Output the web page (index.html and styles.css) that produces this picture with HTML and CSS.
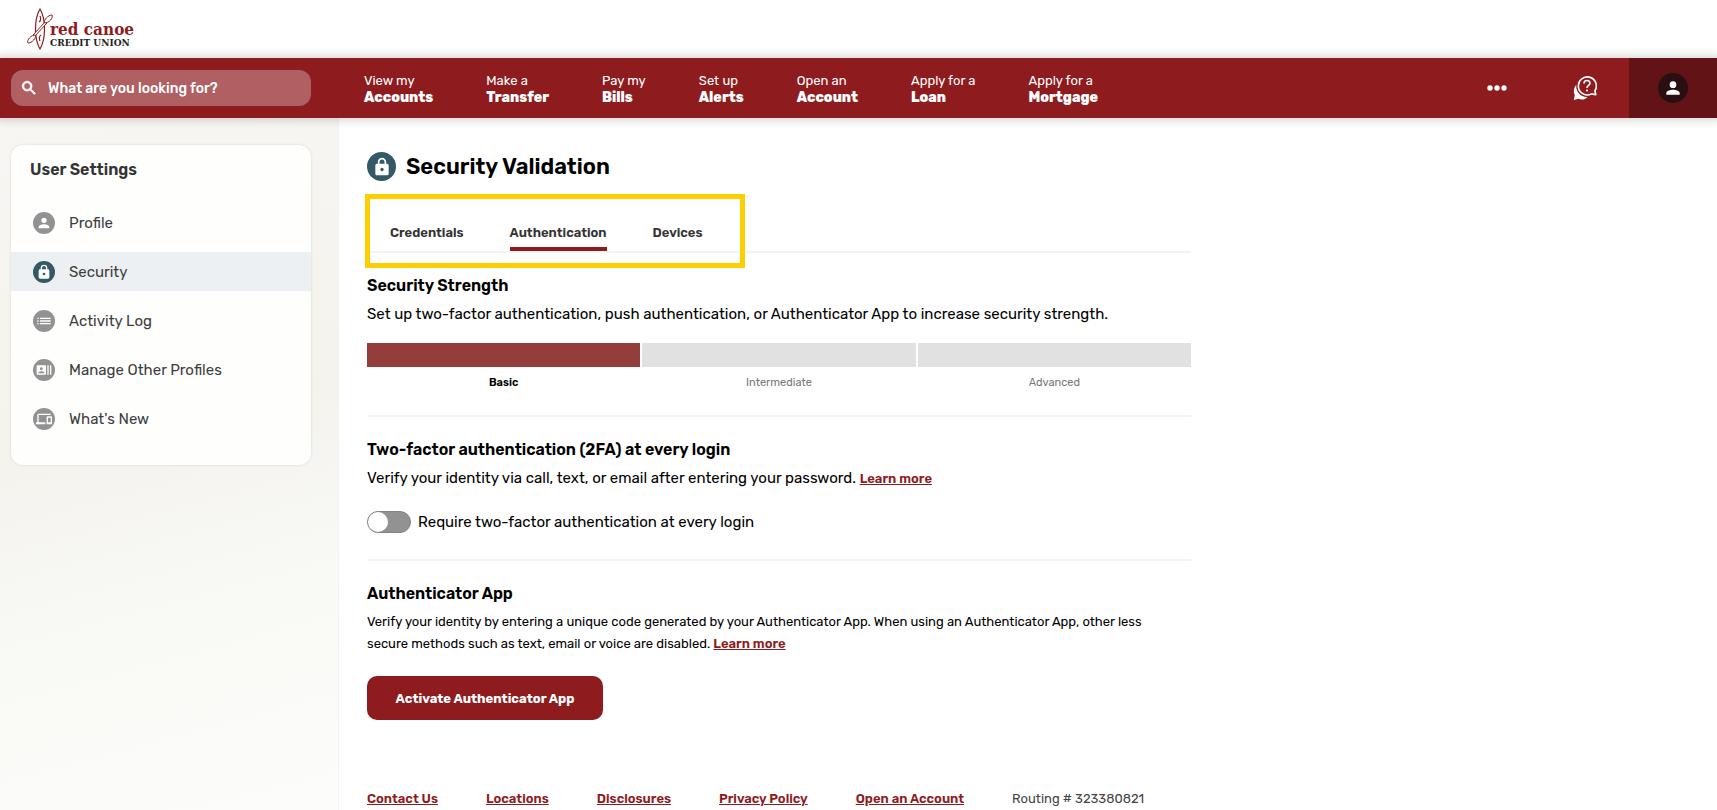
FILE: index.html
```html
<!DOCTYPE html>
<html lang="en">
<head>
  <meta charset="UTF-8" />
  <title>Security Validation | Red Canoe Credit Union</title>
  <meta name="viewport" content="width=device-width, initial-scale=1.0" />
  <link rel="stylesheet" href="styles.css">
</head>
<body>
  <!-- Shared icons -->
  <svg class="sprite" aria-hidden="true">
    <symbol id="icon-person" viewBox="0 0 24 24">
      <path d="M12 12a4 4 0 1 0 0-8 4 4 0 0 0 0 8zm0 2c-2.700 0-8 1.300-8 4v2h16v-2c0-2.700-5.300-4-8-4z" />
    </symbol>
    <symbol id="icon-lock" viewBox="0 0 24 24">
      <path fill-rule="evenodd" d="M18 8h-1V6A5 5 0 0 0 7 6v2H6a2 2 0 0 0-2 2v10c0 1.100.9 2 2 2h12a2 2 0 0 0 2-2V10a2 2 0 0 0-2-2zm-6 9a2 2 0 1 1 0-4 2 2 0 0 1 0 4zM9 8V6a3 3 0 0 1 6 0v2H9z" />
    </symbol>
    <symbol id="icon-list" viewBox="0 0 24 24">
      <path d="M2 7h2v2H2zm4 0h16v2H6zM2 11h2v2H2zm4 0h16v2H6zM2 15h2v2H2zm4 0h16v2H6z" />
    </symbol>
    <symbol id="icon-profiles" viewBox="0 0 24 24">
      <path fill-rule="evenodd" d="M21 5v14h2V5h-2zm-4 14h2V5h-2v14zM14 5H2a1 1 0 0 0-1 1v12a1 1 0 0 0 1 1h12a1 1 0 0 0 1-1V6a1 1 0 0 0-1-1zM8 7.800a2.200 2.200 0 1 1 0 4.400 2.200 2.200 0 0 1 0-4.400zM12.500 17h-9v-.8c0-1.500 3-2.300 4.500-2.300s4.500.8 4.500 2.300z" />
    </symbol>
    <symbol id="icon-devices" viewBox="0 0 24 24">
      <path fill-rule="evenodd" d="M4 6h18V4H4a2 2 0 0 0-2 2v11H0v3h14v-3H4V6zm19 2h-6a1 1 0 0 0-1 1v10a1 1 0 0 0 1 1h6a1 1 0 0 0 1-1V9a1 1 0 0 0-1-1zm-1 9h-4v-7h4v7z" />
    </symbol>
  </svg>

  <header>
    <div class="brand">
      <a class="logo" href="#" aria-label="Red Canoe Credit Union">
        <svg class="logo-mark" viewBox="0 0 28 42" aria-hidden="true">
          <g fill="none" stroke="#8e1c1e" stroke-width="1.200">
            <path d="M14 1C8 11 8 31 14 41C20 31 20 11 14 1z" />
            <path d="M13 14c2-1 2-4 1-6M15 27c-2 1-2 4-1 6" />
          </g>
          <g fill="#fff" stroke="#8e1c1e" stroke-width="1">
            <path d="M7 27L19.500 13.500L21 15L8.500 28.500z" />
            <path d="M18.500 15c-1-3 3.500-8 7.500-8c1.500 3-3 8-7.500 8z" />
            <path d="M9.500 27c1 3-3.500 8-7.500 8c-1.500-3 3-8 7.500-8z" />
          </g>
        </svg>
        <span class="logo-text">
          <span class="logo-name">red canoe</span>
          <span class="logo-sub">CREDIT UNION</span>
        </span>
      </a>
    </div>

    <div class="navbar">
      <form class="search">
        <svg class="search-icon" viewBox="0 0 24 24" aria-hidden="true">
          <path d="M15.500 14h-.8l-.3-.3A6.500 6.500 0 1 0 13.700 14.400l.3.3v.8l5 5 1.500-1.500-5-5zm-6 0a4.500 4.500 0 1 1 0-9 4.500 4.500 0 0 1 0 9z" />
        </svg>
        <input type="search" aria-label="Search" placeholder="What are you looking for?">
      </form>

      <nav class="main-nav">
        <a href="#">View my <strong>Accounts</strong></a>
        <a href="#">Make a <strong>Transfer</strong></a>
        <a href="#">Pay my <strong>Bills</strong></a>
        <a href="#">Set up <strong>Alerts</strong></a>
        <a href="#">Open an <strong>Account</strong></a>
        <a href="#">Apply for a <strong>Loan</strong></a>
        <a href="#">Apply for a <strong>Mortgage</strong></a>
      </nav>

      <div class="actions">
        <button class="action" type="button" aria-label="More">
          <svg class="dots" viewBox="0 0 20 6"><circle cx="3" cy="3" r="2.700" /><circle cx="10" cy="3" r="2.700" /><circle cx="17" cy="3" r="2.700" /></svg>
        </button>
        <button class="action" type="button" aria-label="Help">
          <svg class="chat" viewBox="0 0 24 24">
            <path d="M3.300 9C.8 11.500 0 16 1.800 19L.8 24L5.500 22.800C8.500 24.300 12.500 23.500 14.500 21C8 21.500 2.500 16 3.300 9z" />
            <path d="M22.800 18.700L21.900 14.800A9 9 0 1 0 18.500 17.900z" fill="none" stroke="#fff" stroke-width="1.600" stroke-linejoin="round" />
            <path d="M11 7.500c0-4 6-4 6-.5c0 2.400-3 2.300-3 5" fill="none" stroke="#fff" stroke-width="1.600" />
            <circle cx="14" cy="14.500" r="1.100" />
          </svg>
        </button>
        <button class="action account" type="button" aria-label="Account">
          <span class="avatar"><svg><use href="#icon-person" /></svg></span>
        </button>
      </div>
    </div>
  </header>

  <div class="layout">
    <aside class="sidebar">
      <div class="settings">
        <h2>User Settings</h2>
        <nav class="settings-nav">
          <a href="#"><span class="badge"><svg><use href="#icon-person" /></svg></span>Profile</a>
          <a href="#" class="active"><span class="badge"><svg><use href="#icon-lock" /></svg></span>Security</a>
          <a href="#"><span class="badge"><svg><use href="#icon-list" /></svg></span>Activity Log</a>
          <a href="#"><span class="badge"><svg><use href="#icon-profiles" /></svg></span>Manage Other Profiles</a>
          <a href="#"><span class="badge"><svg><use href="#icon-devices" /></svg></span>What's New</a>
        </nav>
      </div>
    </aside>

    <main>
      <div class="content">
        <h1><span class="badge badge-large"><svg><use href="#icon-lock" /></svg></span>Security Validation</h1>

        <div class="tab-bar">
          <div class="tabs" role="tablist">
            <button type="button" role="tab" aria-selected="false">Credentials</button>
            <button type="button" role="tab" aria-selected="true">Authentication</button>
            <button type="button" role="tab" aria-selected="false">Devices</button>
          </div>
          <div class="highlight"></div>
        </div>

        <section class="strength-section">
          <h3>Security Strength</h3>
          <p>Set up two-factor authentication, push authentication, or Authenticator App to increase security strength.</p>
          <ol class="strength">
            <li class="current">Basic</li>
            <li>Intermediate</li>
            <li>Advanced</li>
          </ol>
        </section>

        <section class="twofactor-section">
          <h3>Two-factor authentication (2FA) at every login</h3>
          <p>Verify your identity via call, text, or email after entering your password. <a href="#">Learn more</a></p>
          <label class="toggle">
            <input type="checkbox" role="switch">
            Require two-factor authentication at every login
          </label>
        </section>

        <section class="app-section">
          <h3>Authenticator App</h3>
          <p class="small">Verify your identity by entering a unique code generated by your Authenticator App. When using an Authenticator App, other less secure methods such as text, email or voice are disabled. <a href="#">Learn more</a></p>
          <button class="primary" type="button">Activate Authenticator App</button>
        </section>

        <footer>
          <a href="#">Contact Us</a>
          <a href="#">Locations</a>
          <a href="#">Disclosures</a>
          <a href="#">Privacy Policy</a>
          <a href="#">Open an Account</a>
          <span>Routing # 323380821</span>
        </footer>
      </div>
    </main>
  </div>
</body>
</html>
```
FILE: styles.css
```css
* {
  box-sizing: border-box;
}

body {
  margin: 0;
  min-height: 100vh;
  display: flex;
  flex-direction: column;
  font-family: Rubik, Roboto, sans-serif;
  font-size: 15px;
  color: #000;
  background: #fff;
}

h1, h2, h3, p {
  margin: 0;
}

button,
input {
  font-family: inherit;
}

button {
  border: 0;
  padding: 0;
  background: none;
  cursor: pointer;
}

a {
  color: #8e1c1e;
}

.sprite {
  display: none;
}

/* Header */
header {
  position: relative;
  z-index: 1;
}

.brand {
  height: 58px;
  padding: 8px 26px;
}

.logo {
  display: inline-flex;
  text-decoration: none;
}

.logo-mark {
  width: 28px;
  height: 42px;
}

.logo-text {
  display: flex;
  flex-direction: column;
  margin-left: -4px;
  padding-top: 12px;
}

.logo-name {
  font: bold 17px/18px "DejaVu Serif Condensed", "DejaVu Serif", serif;
}

.logo-sub {
  font: bold 9px/10px "DejaVu Serif", serif;
  color: #222;
}

.navbar {
  display: flex;
  align-items: center;
  height: 60px;
  padding-left: 11px;
  background: #8e1c1e;
  box-shadow: 0 0 8px 3px rgba(0, 0, 0, 0.15);
}

.search {
  display: flex;
  align-items: center;
  width: 300px;
  height: 36px;
  padding: 0 9px;
  gap: 10px;
  border-radius: 12px;
  background: #b06062;
}

.search-icon {
  width: 18px;
  height: 18px;
  flex: none;
  fill: #fff;
  stroke: #fff;
}

.search input {
  flex: 1;
  min-width: 0;
  border: 0;
  padding: 0;
  background: none;
  color: #fff;
  font-size: 14px;
  font-weight: 500;
}

.search input::placeholder {
  color: #fff;
  opacity: 1;
}

.main-nav {
  display: flex;
  gap: 53px;
  margin-left: 53px;
  padding-top: 2px;
}

.main-nav a {
  color: #fff;
  font-size: 13px;
  line-height: 17px;
  text-decoration: none;
}

.main-nav strong {
  display: block;
  font-size: 14px;
  font-weight: 800;
}

.actions {
  display: flex;
  align-self: stretch;
  margin-left: auto;
}

.action {
  display: flex;
  align-items: center;
  justify-content: center;
  width: 88px;
  fill: #fff;
}

.dots {
  width: 20px;
  height: 6px;
}

.chat {
  width: 24px;
  height: 24px;
}

.account {
  background: #621315;
}

.avatar {
  display: flex;
  align-items: center;
  justify-content: center;
  width: 30px;
  height: 30px;
  border-radius: 50%;
  background: #2b0e10;
}

.avatar svg {
  width: 20px;
  height: 20px;
}

/* Page body */
.layout {
  display: flex;
  flex: 1;
}

.sidebar {
  flex: none;
  width: 339px;
  padding: 27px 27px 0 11px;
  border-right: 1px solid #f2f2ef;
  background: linear-gradient(165deg, #f7f6f2 0%, #f4f3ee 45%, #f9f9f6 70%, #fcfcfa 100%);
}

.settings {
  padding: 16px 0 27px;
  border-radius: 12px;
  background: #fefefd;
  box-shadow: 0 0 3px rgba(0, 0, 0, 0.12);
}

.settings h2 {
  padding: 0 19px;
  font-size: 16px;
  line-height: 18px;
  font-weight: 600;
  color: #333;
}

.settings-nav {
  display: flex;
  flex-direction: column;
  gap: 10px;
  padding-top: 24px;
}

.settings-nav a {
  display: flex;
  align-items: center;
  gap: 14px;
  height: 39px;
  padding-left: 22px;
  color: #3d3d3d;
  text-decoration: none;
}

.settings-nav .active {
  background: #ecf0f2;
}

.badge {
  display: flex;
  align-items: center;
  justify-content: center;
  flex: none;
  width: 22px;
  height: 22px;
  border-radius: 50%;
  background: #929292;
  fill: #fff;
}

.badge svg {
  width: 16px;
  height: 16px;
}

.active .badge,
.badge-large {
  background: #335966;
}

.badge-large {
  width: 29px;
  height: 29px;
}

.badge-large svg {
  width: 20px;
  height: 20px;
}

main {
  flex: 1;
  padding: 34px 28px 0;
}

.content {
  max-width: 824px;
}

h1 {
  display: flex;
  align-items: center;
  gap: 10px;
  font-size: 22px;
  line-height: 29px;
  font-weight: 600;
}

/* Tabs */
.tab-bar {
  position: relative;
  margin-top: 35px;
  border-bottom: 2px solid #f3f3f3;
}

.tabs {
  display: flex;
  gap: 46px;
  padding-left: 23px;
}

.tabs button {
  height: 35px;
  border-bottom: 4px solid transparent;
  padding-top: 2px;
  color: #333;
  font-size: 13px;
  font-weight: 600;
}

.tabs [aria-selected="true"] {
  border-color: #8e1c1e;
}

.highlight {
  position: absolute;
  top: -22px;
  left: -2px;
  width: 380px;
  height: 74px;
  border: 5px solid #ffce00;
  pointer-events: none;
}

/* Sections */
section {
  border-bottom: 2px solid #f3f3f3;
  padding-top: 23px;
}

h3 {
  font-size: 16px;
  line-height: 20px;
  font-weight: 600;
}

section p {
  margin-top: 7px;
  line-height: 22px;
}

section p a {
  font-size: 13px;
  font-weight: 600;
}

.strength-section {
  padding-bottom: 24px;
}

.strength {
  display: grid;
  grid-template-columns: repeat(3, 1fr);
  gap: 2px;
  margin: 18px 0 0;
  padding: 0;
  list-style: none;
  text-align: center;
  font-size: 11px;
  line-height: 16px;
  color: #777;
}

.strength li::before {
  content: "";
  display: block;
  height: 24px;
  margin-bottom: 8px;
  background: #e1e1e1;
}

.strength .current {
  color: #000;
  font-weight: 600;
}

.strength .current::before {
  background: #943d3d;
}

.twofactor-section {
  padding-bottom: 26px;
}

.toggle {
  display: flex;
  align-items: center;
  gap: 7px;
  margin-top: 21px;
  line-height: 22px;
}

.toggle input {
  appearance: none;
  width: 44px;
  height: 22px;
  margin: 0;
  border: 1px solid #858585;
  border-radius: 11px;
  background: #929292;
}

.toggle input::before {
  content: "";
  display: block;
  width: 20px;
  height: 20px;
  border-radius: 50%;
  background: #fff;
}

.toggle input:checked::before {
  margin-left: auto;
}

.app-section {
  border-bottom: 0;
}

section .small {
  padding-right: 24px;
  font-size: 13px;
}

.primary {
  width: 236px;
  height: 44px;
  margin-top: 21px;
  border-radius: 10px;
  background: #8e1c1e;
  color: #fff;
  font-size: 13px;
  font-weight: 700;
}

/* Footer */
footer {
  display: flex;
  gap: 48px;
  padding-top: 69px;
  font-size: 13px;
  line-height: 20px;
}

footer a {
  font-weight: 600;
}

footer span {
  color: #444;
}
```
